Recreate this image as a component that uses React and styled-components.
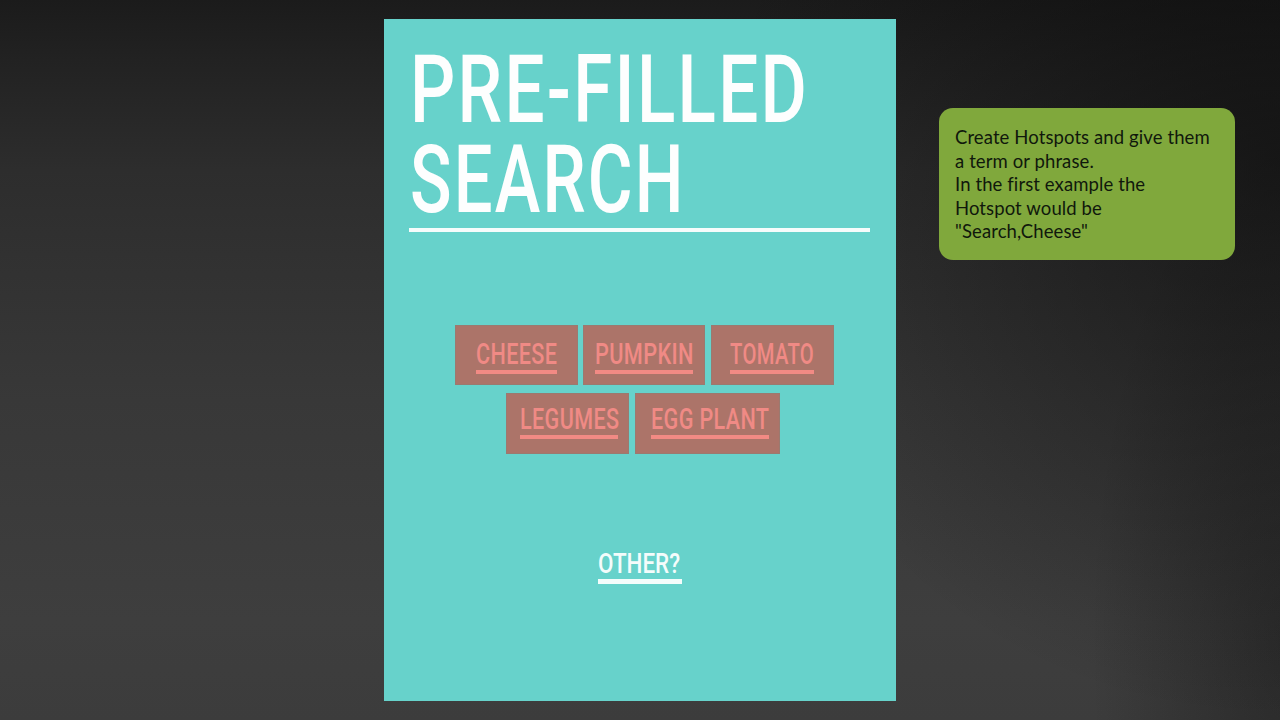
import React from "react"
import styled, { createGlobalStyle } from "styled-components"

const GlobalStyle = createGlobalStyle`
    html, body {
        margin: 0;
        padding: 0;
        background: #2b2b2b;
    }
`

const App = () => {
    return (
        <Stage>
            <GlobalStyle />
            <Poster>
                <Heading>
                    <HeadingLine $scale={0.755}>PRE-FILLED</HeadingLine>
                    <HeadingLine $scale={0.73}>SEARCH</HeadingLine>
                </Heading>
                <Rule />
                <Tags>
                    <TagRow $offset={8} $gap={5.5}>
                        <Tag $width={123}><TagLabel $width={81}><TagText $scale={0.72}>CHEESE</TagText></TagLabel></Tag>
                        <Tag $width={122}><TagLabel $width={98}><TagText $scale={0.725}>PUMPKIN</TagText></TagLabel></Tag>
                        <Tag $width={123}><TagLabel $width={84}><TagText $scale={0.675}>TOMATO</TagText></TagLabel></Tag>
                    </TagRow>
                    <TagRow $offset={6} $gap={6}>
                        <Tag $width={123} $high><TagLabel $width={98} $shift={3}><TagText $scale={0.72}>LEGUMES</TagText></TagLabel></Tag>
                        <Tag $width={145} $high><TagLabel $width={118} $shift={5}><TagText $scale={0.72}>EGG PLANT</TagText></TagLabel></Tag>
                    </TagRow>
                </Tags>
                <Other>
                    <OtherLabel><OtherText>OTHER?</OtherText></OtherLabel>
                </Other>
            </Poster>
            <Callout>
                Create Hotspots and give them<br />
                a term or phrase.<br />
                In the first example the<br />
                Hotspot would be<br />
                "Search,Cheese"
            </Callout>
        </Stage>
    )
}

export default App;

const Stage = styled.div`
    width: 1280px;
    height: 720px;
    overflow: hidden;
    display: flex;
    align-items: flex-start;
    padding: 19px 0 0 384px;
    box-sizing: border-box;
    background:
        radial-gradient(ellipse 560px 560px at 1280px 160px, rgba(8, 8, 8, 0.6), transparent),
        radial-gradient(ellipse 200px 500px at 1290px 640px, rgba(8, 8, 8, 0.35), transparent),
        linear-gradient(to bottom, #1b1b1b 0, #222 60px, #2d2d2d 170px, #383838 400px, #3e3e3e 620px, #3c3c3c 720px);
`
const Poster = styled.div`
    width: 512px;
    height: 682px;
    flex-shrink: 0;
    background: #67d2cb;
    box-sizing: border-box;
    padding-top: 26px;
    font-family: Roboto, "Liberation Sans", sans-serif;
`
const Heading = styled.h1`
    margin: 0 0 0 26px;
    font-size: 94px;
    font-weight: 500;
    line-height: 90px;
    letter-spacing: 3px;
    color: #fdfefe;
`
const HeadingLine = styled.div`
    white-space: nowrap;
    transform: scaleX(${props => props.$scale});
    transform-origin: left center;
`
const Rule = styled.div`
    width: 461px;
    height: 4px;
    margin: 3px 0 0 25px;
    background: #f6fcfb;
`
const Tags = styled.div`
    display: flex;
    flex-direction: column;
    gap: 8px;
    margin-top: 93px;
`
const TagRow = styled.div`
    display: flex;
    justify-content: center;
    gap: ${props => props.$gap}px;
    padding-left: ${props => props.$offset}px;
`
const Tag = styled.div`
    width: ${props => props.$width}px;
    height: ${props => props.$high ? 61 : 60}px;
    box-sizing: border-box;
    display: flex;
    justify-content: center;
    align-items: flex-start;
    padding-top: ${props => props.$high ? 0 : 3}px;
    background: #ac7469;
    box-shadow: inset 0 0 0 1px #9a7a70;
`
const TagLabel = styled.div`
    width: ${props => props.$width}px;
    flex-shrink: 0;
    height: 46px;
    margin-left: ${props => props.$shift || 0}px;
    box-sizing: border-box;
    border-bottom: 4px solid #f28a84;
    font-size: 30px;
    font-weight: 500;
    line-height: 51px;
    letter-spacing: 0.5px;
    color: #f08a85;
    white-space: nowrap;
`
const TagText = styled.span`
    display: inline-block;
    transform: scaleX(${props => props.$scale});
    transform-origin: left center;
`
const Other = styled.div`
    display: flex;
    justify-content: center;
    margin-top: 92px;
`
const OtherLabel = styled.div`
    width: 84px;
    height: 38px;
    box-sizing: border-box;
    border-bottom: 5px solid #f4fcfb;
    font-size: 28px;
    font-weight: 500;
    line-height: 36px;
    color: #f4fcfb;
    white-space: nowrap;
`
const OtherText = styled.span`
    display: inline-block;
    transform: scaleX(0.8);
    transform-origin: left center;
`
const Callout = styled.div`
    width: 296px;
    height: 152px;
    flex-shrink: 0;
    margin: 89px 0 0 43px;
    box-sizing: border-box;
    padding: 18px 0 0 16px;
    border-radius: 14px;
    background: #80a83c;
    color: #10180c;
    font-family: Lato, "Open Sans", sans-serif;
    font-size: 18.5px;
    letter-spacing: 0.1px;
    line-height: 23.5px;
`
